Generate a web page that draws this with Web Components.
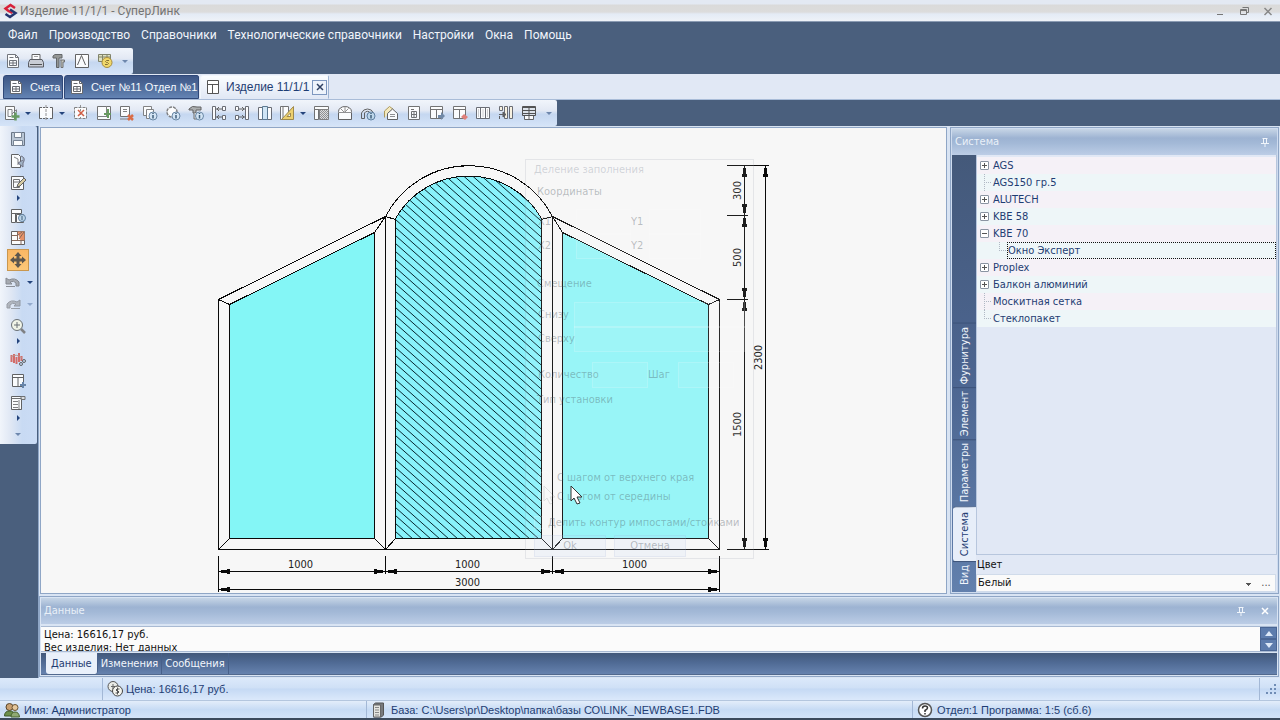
<!DOCTYPE html>
<html lang="ru">
<head>
<meta charset="utf-8">
<title>Изделие 11/1/1 - СуперЛинк</title>
<style>
  html, body {
    margin: 0;
    height: 100%;
  }
  body {
    --navy: #4a5f7d;
    --ink: #1f3d73;
    --pale: #e1e8f5;
    --ui: Roboto, 'Open Sans', sans-serif;
    --tahoma: 'DejaVu Sans Condensed', 'DejaVu Sans', sans-serif;
    --sans: 'Liberation Sans', Arial, sans-serif;
    font: 11px/16px var(--tahoma);
    color: var(--ink);
    background: var(--navy);
    overflow: hidden;
  }
</style>
</head>
<body>
<app-window></app-window>

<script>
'use strict';

// 16x16 glyphs, shared by toolbars, tabs and status cells
const icons = {
  logo: '<path d="M13 5 8.500 2 3.500 5.500l3 2.500 4 2" fill="none" stroke="#d8203a" stroke-width="2.500"/><path d="M8 6.500l5.500 3.500L8 14l-4.500-3" fill="none" stroke="#24356f" stroke-width="2.500"/>',
  doc: '<path d="M2.500 1.500h8l3 3v10h-11z" fill="#fff" stroke="#66696f"/><path d="M10.500 1.500v3h3M4.500 4.500h4M4.500 7.500h7v5h-7zM4.500 10h7M8 7.500v5" fill="none" stroke="#66696f"/>',
  printer: '<path d="M4 1.500h8v5H4z" fill="#fff" stroke="#555"/><path d="M2 6.500h12l1.500 3v4.500H.5V9.500z" fill="#c9ccd2" stroke="#4d4f55"/><path d="M2 11.500h12" stroke="#444"/><path d="M6 3.500h4" stroke="#999"/>',
  hammer: '<path d="M2 3l2-1.500h7V5H8v9.500H5.500V5H2z" fill="#8d8f8c" stroke="#55585a"/><path d="M9.500 7h4v2h-1.500v5.500H10V7z" fill="#c5c5b8" stroke="#666"/>',
  letter: '<path d="M1.500 1.500h13v13h-13z" fill="#fff" stroke="#555"/><path d="M3.500 12 7.500 2.500l4 9.500M1 14.500h5" fill="none" stroke="#555"/>',
  money: '<path d="M1.500 1.500h12v7h-12z" fill="#dfe2c0" stroke="#77795c"/><path d="M1 4h13M5.500 1v8M10 1v4" stroke="#77795c"/><circle cx="10" cy="9.500" r="5" fill="#f5d85c" stroke="#a5852a"/><path d="M12 7.500H9.500q-2 1 0 2h1q2 1 0 2H8" fill="none" stroke="#7d6420"/>',
  layout: '<path d="M2.500 1.500h11v13h-11zM2.500 5.500h11M7.500 5.500v9" fill="#fff" stroke="#555"/>',
  docAdd: '<path d="M1.500 1.500h9v13h-9z" fill="#fff" stroke="#666"/><path d="M4 4.500h4v7M4 4.500v7h3" fill="none" stroke="#777"/><path d="M8 9l4-4M12.500 4.500v3" fill="none" stroke="#777"/><path d="M11.500 7.500v8M7.500 11.500h8" stroke="#5c9450" stroke-width="2.500"/>',
  split: '<path d="M2 3h12v10H2z" fill="#fff"/><path d="M4 2.500H1.500v11H4M12 2.500h2.500v11H12" fill="none" stroke="#555"/><path d="M5 2.500h6M5 13.500h6" stroke="#555" stroke-dasharray="2 1"/><path d="M8 0v16" stroke="#888" stroke-dasharray="3 1"/>',
  splitDel: '<path d="M1.500 2.500h12v11h-12z" fill="#fff" stroke="#777" stroke-dasharray="3 1"/><path d="M7.500 0v16" stroke="#888" stroke-dasharray="2 2"/><path d="M5 5l6 6M11 5l-6 6" stroke="#d25234" stroke-width="1.500"/>',
  frameAdd: '<path d="M1.500 1.500h13v13h-13z" fill="#fff" stroke="#666"/><path d="M10.500 1v10M1 11.500h10" fill="none" stroke="#777"/><path d="M12 4v9M8 9h7" stroke="#5c9450" stroke-width="2"/>',
  docDel: '<path d="M1.500 1.500h9v10h-9z" fill="#fff" stroke="#666"/><path d="M4 4.500h4M4 6.500h4M1 14h8" stroke="#777"/><path d="M9 10l5 5M14 10l-5 5" stroke="#dc6236" stroke-width="2.500"/>',
  docsInfo: '<path d="M1.500 1.500h8v9h-8z" fill="#fff" stroke="#777"/><path d="M4.500 4.500h7v9h-7z" fill="#fff" stroke="#777"/><circle cx="11" cy="11" r="4" fill="#d5e6f5" stroke="#5f7f9d"/><path d="M11 8v1M11 10v3.500" stroke="#32536f" stroke-width="1.500"/>',
  gearInfo: '<circle cx="7" cy="7" r="5" fill="#fff" stroke="#777" stroke-width="1.500" stroke-dasharray="3 1"/><circle cx="11" cy="11" r="4" fill="#d5e6f5" stroke="#5f7f9d"/><path d="M11 8v1M11 10v3.500" stroke="#32536f" stroke-width="1.500"/>',
  hammerInfo: '<path d="M1 4q3-4 8-2h4v3H8v3H5V5H1z" fill="#a5a8a8" stroke="#555"/><path d="M6 8v6h3V8" fill="#ddd" stroke="#666"/><circle cx="11.500" cy="11" r="4" fill="#d5e6f5" stroke="#5f7f9d"/><path d="M11.500 8v1M11.500 10v3.500" stroke="#32536f" stroke-width="1.500"/>',
  arrowsLeft: '<path d="M1.500 1.500h3v13h-3zM11.500 1.500h3v4h-3zM11.500 10.500h3v4h-3z" fill="#fff" stroke="#5d6068"/><path d="M5 4h6M5 12h6M8 2 6 4l2 2M8 10l-2 2 2 2" fill="none" stroke="#555"/>',
  arrowsRight: '<path d="M11.500 1.500h3v13h-3zM1.500 1.500h3v4h-3zM1.500 10.500h3v4h-3z" fill="#fff" stroke="#5d6068"/><path d="M5 4h6M5 12h6M8 2l2 2-2 2M8 10l2 2-2 2" fill="none" stroke="#555"/>',
  columns: '<path d="M1.500 2.500h13v12h-13z" fill="#fff" stroke="#5d6068"/><path d="M5.500 1.500h5v13h-5z" fill="#cfe6f6" stroke="#4f6f88"/>',
  ruler: '<path d="M1.500 1.500h8v13h-8zM4 1v13" fill="#fff" stroke="#666"/><path d="M14.500 1.500v13h-12z" fill="#f0cf60" stroke="#99803a"/><path d="M11.500 8v3.500h-3.500z" fill="#fff" stroke="#99803a"/>',
  mesh: '<path d="M.5 1.500h14v3H.5zM.5 4.500h4v10h-4z" fill="#fff" stroke="#666"/><path d="M5.500 4.500h9v10h-9z" fill="#ddd" stroke="#777"/><g shape-rendering="crispEdges" stroke="#8a8a8a" stroke-dasharray="1 1"><path d="M6 5.500h8M6 7.500h8M6 9.500h8M6 11.500h8M6 13.500h8"/><path d="M7 6.500h7M7 8.500h7M7 10.500h7M7 12.500h7"/></g>',
  arch: '<path d="M1.500 6.500a6.500 5 0 0 1 13 0v8h-13z" fill="#fff" stroke="#555"/><path d="M1 7.500h14M8 1v6M3.500 3.500l4 4 4-4" fill="none" stroke="#888"/>',
  archInfo: '<path d="M1.500 13.500V8a6.500 6.500 0 0 1 12 0M4.500 13.500V8a3.500 3.500 0 0 1 6 0M1.500 13.500h3" fill="none" stroke="#555"/><circle cx="11" cy="11" r="4" fill="#bcd6ea" stroke="#55789a"/><path d="M11 8v1M11 10v3.500" stroke="#32536f" stroke-width="1.500"/>',
  houses: '<path d="M1.500 12.500V6l5-4.500 4 3" fill="#f7eab8" stroke="#a8924c"/><path d="M4.500 14.500V8.500l5-4.500 5 4.500v6z" fill="#fff" stroke="#555"/><path d="M7 9.500h5M7 11.500h5" stroke="#888"/>',
  table: '<path d="M2.500 1.500h11v13h-11z" fill="#fff" stroke="#666"/><path d="M5 4.500h3M5.500 6.500h5v6h-5zM5 9.500h6M8 6v7" fill="none" stroke="#666"/>',
  layoutNext: '<path d="M1.500 1.500h12v12h-12zM1.500 4.500h12M7.500 4.500v9" fill="#fff" stroke="#666"/><path d="M9 10h3V7l4 4-4 4v-2H9z" fill="#68819f"/>',
  layoutDel: '<path d="M1.500 1.500h12v12h-12zM1.500 4.500h12M7.500 4.500v9" fill="#fff" stroke="#666"/><path d="M9 12l3-3 4 3-3 3z" fill="#e3776f"/>',
  bars: '<path d="M1.500 2.500h13v11h-13zM5.500 2v12M10.500 2v12" fill="#fff" stroke="#5d6068"/><path d="M3.500 4v8M8 4v8M12.500 4v8" stroke="#ccc"/>',
  barsMove: '<path d="M1.500 1.500h3v4h-3zM6.500 1.500h3v12h-3zM11.500 1.500h3v12h-3z" fill="#fbf3df" stroke="#5d6068"/><path d="M1 9.500h7M5 7l3 2.500L5 12zM1.500 11v3" fill="#555" stroke="#555"/>',
  grid: '<path d="M1.500 1.500h13v9h-13z" fill="#dde3ea" stroke="#444"/><path d="M1 2.500h14M1 5.500h14M1 8.500h14M8 1v10" stroke="#444"/><path d="M3.500 11v3.500h9V11M8 11v3" fill="#fff" stroke="#555"/>',
  save: '<path d="M1.500 1.500h13v13h-13z" fill="#b8c4d2" stroke="#5e6a7a"/><path d="M4.500 1.500h7v5h-7zM3.500 9.500h9v5h-9z" fill="#fff" stroke="#6e7a8a"/>',
  exit: '<path d="M1.500 1.500h7l2 2v11h-9z" fill="#fff" stroke="#555"/><path d="M4 4l4 2v6" fill="none" stroke="#777"/><path d="M11 3q4 1 3 5l-1 2v4l-5-4 5-3V7" fill="#9caec0" stroke="#667"/>',
  edit: '<path d="M1.500 1.500h12v13h-12z" fill="#fff" stroke="#555"/><path d="M3.500 4.500h6v8h-6zM3.500 7h6" fill="none" stroke="#666"/><path d="M7 12l1-3 6-6 2 2-6 6z" fill="#d9ca9a" stroke="#555"/>',
  docInfo: '<path d="M1.500 1.500h10v4h-10zM1.500 5.500h4v9h-4zM6.500 6.500h7v8h-7z" fill="#fff" stroke="#555"/><circle cx="12" cy="10" r="3.500" fill="#bcd6ea" stroke="#55789a"/><path d="M12 8v4" stroke="#32536f"/>',
  picture: '<path d="M1.500 1.500h13v13h-13z" fill="#fff" stroke="#555"/><path d="M7.500 1.500h7v9h-4z" fill="#ea8a5b"/><path d="M9 9l5-7M8 5l4-3M2 5.500h5M7.500 2v9M2 10.500h12M11 11v4" fill="none" stroke="#7d5d4c"/>',
  move: '<path d="M8 0l3.500 4H9.500v2.500H12v-2L16 8l-4 3.500v-2H9.500V12h2L8 16l-3.500-4h2V9.500H4v2L0 8l4-3.500v2h2.500V4h-2z" fill="#4b4b4b"/>',
  undo: '<path d="M1 4v6h6L5 8q4-2 6 1v3h3V8Q10 3 4 6z" fill="#a0a4aa" stroke="#7c8087"/><path d="M1 12.500h9" stroke="#82868d"/>',
  redo: '<path d="M15 4v6H9l2-2Q7 6 5 9v3H2V8Q6 3 12 6z" fill="#a0a4aa" stroke="#7c8087"/><path d="M6 12.500h9" stroke="#82868d"/>',
  zoomIn: '<circle cx="7" cy="7" r="5.500" fill="#f3f6e6" stroke="#5e6468"/><path d="M4 7h6M7 4v6" stroke="#5e6468"/><path d="M11 11l4 4" stroke="#777" stroke-width="2.500"/>',
  cut: '<path d="M1.500 4v7M4 3v9M6.500 6v7M9 2v9M11.500 5v5" stroke="#d3605a" stroke-width="2"/><path d="M1 6q5-4 11 1" fill="none" stroke="#b98a80"/><circle cx="11" cy="13" r="1.500" fill="none" stroke="#555"/><circle cx="14" cy="10" r="1.500" fill="none" stroke="#555"/>',
  frameMove: '<path d="M2.500 1.500h11v12h-11zM2.500 4.500h11M8 4.500v9" fill="#fff" stroke="#555"/><path d="M13 9v6M10 12h6" stroke="#5d7ba0" stroke-width="2"/>',
  script: '<path d="M1.500 1.500h10v13h-10z" fill="#fff" stroke="#555"/><path d="M11 1.500h4v3h-4zM1.500 3.500h10" fill="#ddd" stroke="#666"/><path d="M3 6.500h5M3 9.500h5M3 12.500h5M9 5v9" stroke="#777"/>',
  coins: '<circle cx="6" cy="5.500" r="5" fill="#e9ebe6" stroke="#555"/><path d="M6 3v5M4 5.500h4" stroke="#666"/><circle cx="10.500" cy="10" r="5" fill="#f4f4ee" stroke="#444"/><path d="M12.500 8H10q-2 1 0 2h1q2 1 0 2H8.500M10.500 6.500v7" fill="none" stroke="#555"/>',
  users: '<circle cx="5.500" cy="5" r="3.500" fill="#c9a071" stroke="#574429"/><path d="M.5 14q0-5 5-5t5 5z" fill="#6c8f4c" stroke="#3e5a2c"/><circle cx="11" cy="5.500" r="3" fill="#e5c79c" stroke="#6d5533"/><path d="M7 15q0-5 4-5t4.500 5z" fill="#90a973" stroke="#46602f"/>',
  server: '<path d="M2.500 2.500l2-1.500h8v12l-2 2h-8z" fill="#77797c" stroke="#555"/><path d="M2.500 3h7v12h-7z" fill="#e4e4df" stroke="#666"/><path d="M4 5.500h4M4 8h4M4 10.500h4M4 13h4" stroke="#888"/>',
  help: '<circle cx="8" cy="8" r="6.500" fill="#fff" stroke="#555" stroke-width="1.500"/><path d="M5.500 6.500q0-2.500 2.500-2.500t2.500 2q0 1-2.500 2.500v1.500M8 11v1.500" fill="none" stroke="#333" stroke-width="1.500"/>',
  pin: '<path d="M5.500 4.500h5M6.500 5v4M9.500 5v4M4 9.500h8M8 10v3" fill="none" stroke="#f0f5fb"/>',
  cross: '<path d="M5 5l6 6M11 5l-6 6" stroke="#fff" stroke-width="1.500"/>',
  minimize: '<path d="M5 11.500h6" stroke="#777"/>',
  restore: '<path d="M6.500 4.500h6v5h-2M4.500 6.500h6v5h-6zM4.500 7.500h6" fill="none" stroke="#777"/>',
  close: '<path d="M4.500 5l7 7M11.500 5l-7 7" stroke="#888" stroke-width="1.500"/>',
  tabClose: '<path d="M5 5l6 6M11 5l-6 6" stroke="#2f4163" stroke-width="1.500"/>',
  grip: '<path d="M12 3h2v2h-2zM12 7h2v2h-2zM8 7h2v2H8zM12 11h2v2h-2zM8 11h2v2H8zM4 11h2v2H4z" fill="#6f8cb5"/>'
};

function define(name, render) {
  customElements.define(name, class extends HTMLElement {
    constructor() {
      super();
      this.attachShadow({ mode: 'open' });
    }

    connectedCallback() {
      this.shadowRoot.innerHTML = render(this);
    }
  });
}

define('ui-icon', (el) => `
  <style>
    :host { display: block; flex: none; width: 16px; height: 16px; }
    svg { display: block; }
  </style>
  <svg width="16" height="16" viewBox="0 0 16 16" aria-hidden="true">${icons[el.getAttribute('name')] || ''}</svg>
`);

define('title-bar', () => `
  <style>
    :host {
      display: flex;
      align-items: center;
      height: 22px;
      box-sizing: border-box;
      padding: 0 4px 0 2px;
      gap: 2px;
      border-bottom: 1px solid #8b9bb3;
      background: linear-gradient(#e3e9f3 0, #e3e9f3 4px, #dadada 5px, #dcdcdc 12px, #e4ebf5 14px, #eef2f8);
      color: #747474;
      font: 12px/20px var(--ui);
    }
    span { flex: 1; }
    div { display: flex; gap: 8px; }
    button { border: 0; padding: 0; background: none; }
  </style>
  <ui-icon name="logo"></ui-icon>
  <span><slot></slot></span>
  <div>
    <button aria-label="Свернуть"><ui-icon name="minimize"></ui-icon></button>
    <button aria-label="Развернуть"><ui-icon name="restore"></ui-icon></button>
    <button aria-label="Закрыть"><ui-icon name="close"></ui-icon></button>
  </div>
`);

define('menu-bar', (el) => `
  <style>
    :host { display: flex; height: 26px; padding: 0 3px; }
    button {
      border: 0;
      padding: 0 6px 0 5px;
      background: none;
      color: #f1f5fb;
      font: 12px/26px var(--ui);
    }
  </style>
  ${el.getAttribute('items').split('|').map((item) => `<button>${item}</button>`).join('')}
`);

// items: icon names, "+" adds a drop-down arrow, "*" marks the pressed one, "~" the disabled one
define('tool-bar', (el) => `
  <style>
    :host {
      display: flex;
      width: max-content;
      height: 26px;
      box-sizing: border-box;
      padding: 0 0 0 1px;
      border-radius: 0 2px 2px 0;
      background: linear-gradient(#f1f5fb, #e3e9f4 40%, #c5d7f0 55%, #d5e4f8);
    }
    :host([vertical]) {
      flex-direction: column;
      width: 37px;
      height: auto;
      padding: 2px 1px 0 0;
      background: linear-gradient(90deg, #f1f5fb, #dfe7f4 30%, #c8daf3 60%, #cbdcf5);
    }
    button {
      display: flex;
      flex: none;
      align-items: center;
      justify-content: center;
      border: 0;
      padding: 0;
      width: 23px;
      background: none;
    }
    ui-icon { opacity: .9; }
    button.more { width: 34px; gap: 5px; justify-content: flex-start; padding: 0 0 0 3px; box-sizing: border-box; }
    :host([vertical]) button { width: 100%; height: 22px; }
    :host([vertical]) button.more { flex-direction: column; height: 33px; padding: 3px 0 0; gap: 4px; }
    :host([vertical]) button.side { padding: 0 0 0 5px; justify-content: flex-start; gap: 6px; }
    button.pressed {
      width: 22px !important;
      align-self: center;
      box-sizing: border-box;
      border: 1px solid #c9974f;
      background: linear-gradient(#f9b765, #fdc878);
    }
    button:disabled { opacity: .8; }
    i { border: 3px solid transparent; border-top-color: #24447c; border-bottom: 0; }
    button:disabled i { opacity: .4; }
    :host([vertical]) .more i { border: 3px solid transparent; border-left-color: #24447c; border-right: 0; }
    .end { width: 17px; }
    :host([vertical]) .end { height: 19px; }
    .end i { border-top-color: #6e87ad; }
  </style>
  ${el.getAttribute('items').split(' ').map((item) => {
    const name = item.replace(/[^a-z]/gi, '');
    const kind = item.includes('+') ? 'more' : item.includes('>') ? 'side' : item.includes('*') ? 'pressed' : '';
    const arrow = kind === 'more' || kind === 'side' ? '<i></i>' : '';
    return `<button class="${kind}" aria-label="${name}" ${item.includes('~') ? 'disabled' : ''}><ui-icon name="${name}"></ui-icon>${arrow}</button>`;
  }).join('')}
  <button class="end" aria-label="more"><i></i></button>
`);

define('doc-tab', (el) => `
  <style>
    :host {
      display: flex;
      flex: none;
      box-sizing: border-box;
      min-width: 60px;
      height: 24px;
      margin-right: 1px;
      border: 1px solid #2f4879;
      border-radius: 3px 2px 0 0;
      background: linear-gradient(#3d5686, #52709f 60%, #6484b4);
      color: #f4f8fd;
    }
    :host([wide]) { min-width: 135px; }
    :host([active]) {
      min-width: 129px;
      border-color: #f0f5fc #9db4d3 #e1e8f5 #f0f5fc;
      background: linear-gradient(#fbfdff, #e1e8f5);
      color: #1f3d73;
    }
    button {
      display: flex;
      align-items: center;
      gap: 6px;
      border: 0;
      padding: 0 0 0 4px;
      background: none;
      color: inherit;
      font: 11px/22px var(--sans);
      white-space: nowrap;
    }
    :host([active]) button { gap: 5px; font-size: 12px; }
    button:not([aria-label]) { flex: 1; }
    button[aria-label] {
      align-self: center;
      flex: none;
      justify-content: center;
      width: 15px;
      height: 15px;
      margin: 0 1px 0 3px;
      padding: 0;
      border: 1px solid #7d97bf;
      background: #edf3fb;
    }
  </style>
  <button><ui-icon name="${el.getAttribute('icon')}"></ui-icon><slot></slot></button>
  ${el.hasAttribute('active') ? '<button aria-label="Закрыть"><ui-icon name="tabClose"></ui-icon></button>' : ''}
`);

// product drawing: one unit is one pixel, origin at the left top of the overall size
define('product-drawing', () => {
  const arrow = (x, y, angle) => `<path transform="translate(${x} ${y}) rotate(${angle})" d="M0 0 11-2v4z"/>`;
  const span = (from, to, y) => `<path d="M${from} ${y}H${to}"/>${arrow(from, y, 0)}${arrow(to, y, 180)}`;
  const rise = (from, to, x) => `<path d="M${x} ${from}V${to}"/>${arrow(x, from, 90)}${arrow(x, to, -90)}`;
  let hatch = '';
  for (let y = -130; y < 380; y += 8) {
    hatch += `M177 ${y}l153 136`;
  }

  return `
    <style>
      :host { display: block; min-width: 0; min-height: 0; }
      svg { display: block; width: 100%; height: 100%; }
      text { font: 11px var(--tahoma); fill: #222; stroke: none; text-anchor: middle; }
    </style>
    <svg role="img" aria-label="Изделие 3000 x 2300">
      <defs>
        <clipPath id="sash"><path d="M177 373V53a84 84 0 0 1 146 0V373z"/></clipPath>
      </defs>
      <g transform="translate(177.500 37.500)" fill="none" stroke="#0a0a0a" shape-rendering="crispEdges">
        <path d="M11 139 156 67V373H11z" fill="#84f6f6"/>
        <path d="M490 139 344 67V373h146z" fill="#90f5f7"/>
        <path d="M177 373V53a84 84 0 0 1 146 0V373z" fill="#89f2fb"/>
        <path d="${hatch}" clip-path="url(#sash)" stroke="#06262e" shape-rendering="geometricPrecision"/>
        <path d="M0 134 167 51M334 51l167 83V384H0V134"/>
        <path d="M167 51a94 94 0 0 1 167 0V384M167 51V384"/>
        <path d="M0 134l11 5M167 51l-11 16M167 51l10 3M334 51l-11 3M334 51l10 16M501 134l-11 5"/>
        <path d="M0 384l11-11M156 373l11 11 10-11M323 373l11 11 10-11M490 373l11 11"/>
      </g>
      <g transform="translate(177.500 37.500)" fill="#0a0a0a" stroke="#0a0a0a" shape-rendering="crispEdges">
        <path d="M0 390v36M167 390v18M334 390v18M501 390v36"/>
        ${span(0, 167, 406)}${span(167, 334, 406)}${span(334, 501, 406)}${span(0, 501, 424)}
        <path d="M508 0h42M508 50h21M508 134h21M508 384h42"/>
        ${rise(0, 50, 526)}${rise(50, 134, 526)}${rise(134, 384, 526)}${rise(0, 384, 547)}
        <text x="82" y="402">1000</text>
        <text x="249" y="402">1000</text>
        <text x="416" y="402">1000</text>
        <text x="249" y="420">3000</text>
        <text transform="translate(522 25) rotate(-90)">300</text>
        <text transform="translate(522 92) rotate(-90)">500</text>
        <text transform="translate(522 259) rotate(-90)">1500</text>
        <text transform="translate(543 192) rotate(-90)">2300</text>
      </g>
    </svg>
  `;
});

// dialog caught half way through its fade-out
define('fading-dialog', () => `
  <style>
    :host {
      display: block;
      box-sizing: border-box;
      width: 229px;
      height: 400px;
      padding: 2px 8px;
      border: 1px solid rgba(110, 120, 140, .14);
      background: rgba(250, 251, 255, .08);
      color: rgba(70, 80, 90, .36);
      font: 11px/16px var(--tahoma);
      white-space: nowrap;
    }
    h2 { margin: 0 0 6px; font: inherit; color: rgba(90, 100, 120, .25); }
    fieldset { margin: 0; padding: 0; border: 0; }
    legend { padding: 0 0 0 3px; }
    .pair, .row { display: grid; align-items: center; height: 24px; padding-left: 4px; }
    .pair { grid-template-columns: 38px 55px 18px 52px; }
    .row { grid-template-columns: 36px 1fr; }
    .count { grid-template-columns: 54px 56px 30px 56px; }
    input {
      appearance: none;
      min-width: 0;
      margin: 0;
      height: 22px;
      border: 1px solid rgba(255, 255, 255, .16);
      background: rgba(255, 255, 255, .06);
    }
    .xy { padding: 9px 0 19px; }
    .shift { padding: 10px 0 12px; }
    .type { margin-top: 6px; }
    .mode { padding-top: 60px; }
    label.choice { display: flex; align-items: center; gap: 6px; height: 19px; padding-left: 4px; }
    .choice input { width: 13px; height: 13px; border-radius: 7px; }
    label.split { padding: 7px 0 0; gap: 1px; }
    .split input { border-radius: 0; }
    footer { display: flex; gap: 8px; padding-top: 3px; }
    button {
      width: 72px;
      height: 22px;
      padding: 0;
      border: 1px solid rgba(140, 160, 200, .12);
      background: rgba(190, 215, 245, .14);
      color: inherit;
      font: inherit;
    }
  </style>
  <h2>Деление заполнения</h2>
  <fieldset>
    <legend>Координаты</legend>
    <div class="xy">
      <div class="pair"><label for="x1">X1</label><input id="x1"><label for="y1">Y1</label><input id="y1"></div>
      <div class="pair"><label for="x2">X2</label><input id="x2"><label for="y2">Y2</label><input id="y2"></div>
    </div>
  </fieldset>
  <fieldset>
    <legend>Смещение</legend>
    <div class="shift">
      <div class="row"><label for="low">Снизу</label><input id="low"></div>
      <div class="row"><label for="top">Сверху</label><input id="top"></div>
    </div>
  </fieldset>
  <div class="row count"><label for="count">Количество</label><input id="count"><label for="step">Шаг</label><input id="step"></div>
  <fieldset class="type">
    <legend>Тип установки</legend>
    <div class="mode">
      <label class="choice"><input type="radio" name="mode">С шагом от верхнего края</label>
      <label class="choice"><input type="radio" name="mode">С шагом от середины</label>
    </div>
  </fieldset>
  <label class="choice split"><input type="checkbox">Делить контур импостами/стойками</label>
  <footer><button>Ok</button><button>Отмена</button></footer>
`);

define('drawing-view', () => `
  <style>
    :host {
      display: grid;
      position: relative;
      overflow: hidden;
      border: 1px solid #8fa6c6;
      background: #f7f7f7;
    }
    product-drawing { grid-area: 1 / 1; }
    fading-dialog { position: absolute; left: 484px; top: 31px; }
    .pointer { position: absolute; left: 529px; top: 357px; }
    .trail { position: absolute; left: 502px; top: 357px; opacity: .12; }
  </style>
  <product-drawing></product-drawing>
  <fading-dialog></fading-dialog>
  ${['trail', 'pointer'].map((name) => `
    <svg class="${name}" width="14" height="20" aria-hidden="true">
      <path d="M1 1v15l3-3 3 6 3-1-3-6h5z" fill="#fff" stroke="#333"/>
    </svg>`).join('')}
`);

define('panel-header', (el) => `
  <style>
    :host {
      display: flex;
      flex: none;
      align-items: center;
      height: 26px;
      gap: 8px;
      padding: 0 4px 0 3px;
      background: linear-gradient(#c6d5e6, #9db3d2 35%, #a3b9d7 55%, #bccde6);
      color: #e9f0f8;
      font: 11px/26px var(--tahoma);
    }
    span { flex: 1; }
    button { border: 0; padding: 0; background: none; }
  </style>
  <span><slot></slot></span>
  <button aria-label="Закрепить"><ui-icon name="pin"></ui-icon></button>
  ${el.hasAttribute('closable') ? '<button aria-label="Закрыть"><ui-icon name="cross"></ui-icon></button>' : ''}
`);

define('tree-row', (el) => `
  <style>
    :host {
      display: grid;
      grid-template-columns: 12px 1fr;
      align-items: center;
      height: 17px;
      padding-left: 3px;
      line-height: 17px;
    }
    :host([nested]) { padding-left: 18px; }
    :host(:nth-child(odd)) { background: #f5f1f7; }
    :host(:nth-child(even)) { background: #eef6f8; }
    b {
      justify-self: start;
      width: 7px;
      height: 7px;
      border: 1px solid #8a94a2;
      border-radius: 1px;
      background:
        linear-gradient(#555, #555) center / 5px 1px no-repeat,
        linear-gradient(#555, #555) center / 1px 5px no-repeat,
        #fff;
    }
    :host([open]) b { background: linear-gradient(#555, #555) center / 5px 1px no-repeat, #fff; }
    .stem { align-self: stretch; display: grid; align-items: center; padding-left: 4px; }
    .stem::before {
      content: '';
      grid-area: 1 / 1;
      align-self: stretch;
      width: 1px;
      background: repeating-linear-gradient(#b0b8c4 0 1px, transparent 1px 2px);
    }
    .stem::after {
      content: '';
      grid-area: 1 / 1;
      width: 8px;
      height: 1px;
      background: repeating-linear-gradient(90deg, #b0b8c4 0 1px, transparent 1px 2px);
    }
    :host([nested]) .stem::before, :host([last]) .stem::before { align-self: start; height: 8px; }
    :host([nested]) .label { outline: 1px dotted #111; outline-offset: -1px; }
    .label { padding-left: 1px; }
  </style>
  ${el.hasAttribute('leaf') ? '<span class="stem"></span>' : '<b></b>'}
  <span class="label" role="treeitem"><slot></slot></span>
`);

define('system-panel', () => `
  <style>
    :host {
      display: flex;
      flex-direction: column;
      box-sizing: border-box;
      padding: 1px;
      border: 1px solid #8fa6c6;
      background: #cfdcef;
    }
    .body { display: flex; flex: 1; min-height: 0; }
    nav {
      display: flex;
      flex-direction: column;
      justify-content: flex-end;
      flex: none;
      width: 24px;
      box-sizing: border-box;
      padding: 0 0 4px 1px;
      background: linear-gradient(#44597a, #4c6590 50%, #6280ad);
    }
    nav button {
      writing-mode: vertical-rl;
      transform: rotate(180deg);
      width: 23px;
      padding: 3px 0;
      border: 0;
      border-bottom: 1px solid #3d5379;
      background: none;
      color: #f2f6fc;
      font: 11px/23px var(--tahoma);
      text-align: left;
    }
    nav button.active { padding: 5px 0; background: #e7eef9; color: var(--ink); border-radius: 0 3px 3px 0; }
    .page { display: flex; flex: 1; flex-direction: column; min-width: 0; background: var(--pale); }
    .tree { flex: 1; padding-top: 2px; border: 1px solid #b7c6dd; border-width: 0 1px 1px; }
    label { display: block; height: 19px; padding-left: 1px; color: #111; line-height: 19px; }
    .combo {
      display: flex;
      height: 18px;
      box-sizing: border-box;
      margin: 0 1px 0 0;
      border: 1px solid #d0dbea;
      background: #fafafa;
    }
    select {
      appearance: none;
      flex: 1;
      border: 0;
      padding: 0 1px;
      color: #111;
      font: 11px/16px var(--tahoma);
      background: linear-gradient(#555, #555) right 6px center / 5px 1px no-repeat, linear-gradient(#555, #555) right 7px top 9px / 3px 1px no-repeat, linear-gradient(#555, #555) right 8px top 10px / 1px 1px no-repeat;
    }
    .combo button { width: 18px; padding: 0; border: 0; background: none; color: #555; font: 11px/12px var(--tahoma); }
  </style>
  <panel-header>Система</panel-header>
  <div class="body">
    <nav>
      <button>Фурнитура</button>
      <button>Элемент</button>
      <button>Параметры</button>
      <button class="active">Система</button>
      <button>Вид</button>
    </nav>
    <div class="page">
      <div class="tree" role="tree">
        <tree-row>AGS</tree-row>
        <tree-row leaf>AGS150 гр.5</tree-row>
        <tree-row>ALUTECH</tree-row>
        <tree-row>KBE 58</tree-row>
        <tree-row open>KBE 70</tree-row>
        <tree-row leaf nested>Окно Эксперт</tree-row>
        <tree-row>Proplex</tree-row>
        <tree-row>Балкон алюминий</tree-row>
        <tree-row leaf>Москитная сетка</tree-row>
        <tree-row leaf last>Стеклопакет</tree-row>
      </div>
      <label for="color">Цвет</label>
      <div class="combo">
        <select id="color"><option>Белый</option></select>
        <button aria-label="Выбрать цвет">...</button>
      </div>
    </div>
  </div>
`);

define('data-panel', () => `
  <style>
    :host {
      display: flex;
      flex-direction: column;
      height: 81px;
      box-sizing: border-box;
      padding: 1px 1px 2px;
      border: 1px solid #8fa6c6;
      background: #d9e4f3;
    }
    .memo {
      display: flex;
      flex: none;
      height: 24px;
      margin: 2px 0 1px;
      border: solid #a9bad3;
      border-width: 1px 0;
      background: #fbfbfb;
      color: #111;
      line-height: 13px;
      overflow: hidden;
    }
    .memo p { flex: 1; margin: 0; padding: 1px 3px 0; }
    .spin { display: grid; grid-template-rows: 12px 12px; width: 17px; background: #5d7cad; }
    .spin button { display: grid; place-items: center; border: 1px solid #4a6695; padding: 0; background: none; }
    i { border: 4px solid transparent; border-bottom: 5px solid #dce8f8; border-top: 0; }
    .down i { border-top: 5px solid #dce8f8; border-bottom: 0; }
    nav {
      display: flex;
      flex: 1;
      padding-left: 5px;
      background: linear-gradient(#42587a, #4f6a94 45%, #6682ae);
      border-bottom: 1px solid #52698d;
    }
    nav button {
      border: 0;
      border-right: 1px solid #47608a;
      padding: 0 3px;
      height: 21px;
      background: none;
      color: #f2f6fc;
      font: 11px/21px var(--tahoma);
    }
    nav button.active { padding: 0 5px; background: #e9f0fa; color: var(--ink); border-radius: 0 0 3px 3px; }
  </style>
  <panel-header closable>Данные</panel-header>
  <div class="memo">
    <p>Цена: 16616,17 руб.<br>Вес изделия: Нет данных</p>
    <div class="spin">
      <button aria-label="Вверх"><i></i></button>
      <button class="down" aria-label="Вниз"><i></i></button>
    </div>
  </div>
  <nav>
    <button class="active">Данные</button>
    <button>Изменения</button>
    <button>Сообщения</button>
  </nav>
`);

define('status-cell', (el) => `
  <style>
    :host {
      display: flex;
      align-items: center;
      gap: 3px;
      min-width: 0;
      padding-left: 4px;
      white-space: nowrap;
    }
    :host([sep]) { border-left: 1px solid #a3b8d6; }
    :host([icon=grip]) { padding-left: 2px; }
  </style>
  ${el.hasAttribute('icon') ? `<ui-icon name="${el.getAttribute('icon')}"></ui-icon>` : ''}
  <slot></slot>
`);

define('status-bar', () => `
  <style>
    :host { display: block; flex: none; border-bottom: 2px solid #3c4a5c; font: 11px/16px var(--sans); }
    .line { display: grid; }
    .price {
      grid-template-columns: 102px 1fr 21px;
      height: 22px;
      background: linear-gradient(#dce9fa, #cfe0f6 45%, #c5d9f4 50%, #dbe9fb);
    }
    .info {
      grid-template-columns: 366fr 546fr 368fr;
      height: 18px;
      border-top: 1px solid #b4c6de;
      box-sizing: border-box;
      background: linear-gradient(#e3edfa, #c7dbf4 50%, #d3e3f8);
    }
    .info status-cell { gap: 4px; }
  </style>
  <div class="line price">
    <status-cell></status-cell>
    <status-cell sep icon="coins">Цена: 16616,17 руб.</status-cell>
    <status-cell sep icon="grip"></status-cell>
  </div>
  <div class="line info">
    <status-cell icon="users">Имя: Администратор</status-cell>
    <status-cell sep icon="server">База: C:\\Users\\pr\\Desktop\\папка\\базы СО\\LINK_NEWBASE1.FDB</status-cell>
    <status-cell sep icon="help">Отдел:1 Программа: 1:5 (сб.6)</status-cell>
  </div>
`);

define('app-window', () => `
  <style>
    :host { display: flex; flex-direction: column; height: 100vh; }
    .tabs {
      display: flex;
      align-items: flex-end;
      height: 26px;
      box-sizing: border-box;
      padding-left: 3px;
      background: var(--pale);
      border-bottom: 1px solid #a9bcd8;
    }
    main {
      display: grid;
      flex: 1;
      min-height: 0;
      grid-template: minmax(0, 1fr) / 38px minmax(0, 1fr);
    }
    .work {
      display: grid;
      grid-template: minmax(0, 1fr) 81px / minmax(0, 1fr) 329px;
      gap: 2px;
      padding: 1px 1px 1px 0;
      border-left: 1px solid #8fa6c6;
      background: #d9e4f3;
    }
    .work data-panel { grid-column: 1 / 3; }
    drawing-view { margin: 0 1px; }
  </style>
  <title-bar>Изделие 11/1/1 - СуперЛинк</title-bar>
  <menu-bar items="Файл|Производство|Справочники|Технологические справочники|Настройки|Окна|Помощь"></menu-bar>
  <tool-bar items="doc printer hammer letter money"></tool-bar>
  <div class="tabs">
    <doc-tab icon="doc">Счета</doc-tab>
    <doc-tab icon="doc" wide>Счет №11 Отдел №1</doc-tab>
    <doc-tab icon="layout" active>Изделие 11/1/1</doc-tab>
  </div>
  <tool-bar items="docAdd+ split+ splitDel frameAdd docDel docsInfo gearInfo hammerInfo arrowsLeft arrowsRight columns ruler+ mesh arch archInfo houses table layoutNext layoutDel bars barsMove grid"></tool-bar>
  <main>
    <div>
      <tool-bar vertical items="save exit edit+ docInfo picture move* undo> redo>~ zoomIn+ cut frameMove script+"></tool-bar>
    </div>
    <div class="work">
      <drawing-view></drawing-view>
      <system-panel></system-panel>
      <data-panel></data-panel>
    </div>
  </main>
  <status-bar></status-bar>
`);
</script>
</body>
</html>
